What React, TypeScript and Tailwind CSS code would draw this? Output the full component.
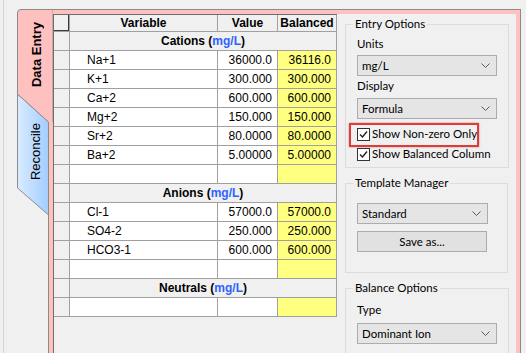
import type { ReactNode } from "react";

type Row =
  | { kind: "group"; label: string }
  | { kind: "data"; name: string; value: string; balanced: string }
  | { kind: "empty" };

const rows: Row[] = [
  { kind: "group", label: "Cations" },
  { kind: "data", name: "Na+1", value: "36000.0", balanced: "36116.0" },
  { kind: "data", name: "K+1", value: "300.000", balanced: "300.000" },
  { kind: "data", name: "Ca+2", value: "600.000", balanced: "600.000" },
  { kind: "data", name: "Mg+2", value: "150.000", balanced: "150.000" },
  { kind: "data", name: "Sr+2", value: "80.0000", balanced: "80.0000" },
  { kind: "data", name: "Ba+2", value: "5.00000", balanced: "5.00000" },
  { kind: "empty" },
  { kind: "group", label: "Anions" },
  { kind: "data", name: "Cl-1", value: "57000.0", balanced: "57000.0" },
  { kind: "data", name: "SO4-2", value: "250.000", balanced: "250.000" },
  { kind: "data", name: "HCO3-1", value: "600.000", balanced: "600.000" },
  { kind: "empty" },
  { kind: "group", label: "Neutrals" },
  { kind: "empty" },
];

const cell = "border-r border-b border-[#a0a0a0] h-[19px]";

function GridRow({ row }: { row: Row }) {
  if (row.kind === "group") {
    return (
      <>
        <div className={`${cell} bg-[#f0f0f0]`} />
        <div className={`${cell} col-span-3 flex items-center justify-center bg-[#f0f0f0] font-bold`}>
          {row.label}&nbsp;(<span className="text-[#2f63ff]">mg/L</span>)
        </div>
      </>
    );
  }
  const d = row.kind === "data" ? row : null;
  return (
    <>
      <div className={`${cell} bg-[#f0f0f0]`} />
      <div className={`${cell} flex items-center bg-white pl-[17px]`}>{d?.name}</div>
      <div className={`${cell} flex items-center justify-end bg-white pr-[5px]`}>{d?.value}</div>
      <div className={`${cell} flex items-center justify-end bg-[#ffff80] pr-[5px]`}>{d?.balanced}</div>
    </>
  );
}

function Combo({ value, w }: { value: string; w: string }) {
  return (
    <div className={`flex h-[21px] items-center justify-between border border-[#acacac] bg-[#e5e5e5] pl-[4px] pr-[6px] ${w}`}>
      <span>{value}</span>
      <svg width="9" height="5" viewBox="0 0 9 5">
        <path d="M0.5 0.5 L4.5 4.5 L8.5 0.5" fill="none" stroke="#5a5a5a" strokeWidth="1" />
      </svg>
    </div>
  );
}

function Check({ label, children }: { label: string; children?: ReactNode }) {
  return (
    <div className="relative flex h-[14px] items-center whitespace-nowrap">
      <span className="flex h-[13px] w-[13px] shrink-0 items-center justify-center border border-[#333] bg-white">
        <svg width="11" height="11" viewBox="0 0 11 11">
          <path d="M2 5.5 L4.5 8 L9 2.5" fill="none" stroke="#222" strokeWidth="1.4" />
        </svg>
      </span>
      <span className="ml-[2px]">{label}</span>
      {children}
    </div>
  );
}

function Group({ title, className, children }: { title: string; className: string; children: ReactNode }) {
  return (
    <fieldset className={`ml-[8px] w-[163px] border border-[#dcdcdc] px-[11px] ${className}`}>
      <legend className="ml-[-4px] px-[2px] leading-[14px]">{title}</legend>
      {children}
    </fieldset>
  );
}

export default function App() {
  return (
    <div className="flex h-[353px] w-[526px] overflow-hidden bg-[#f0f0f0] font-['Liberation_Sans',Arial,sans-serif] text-[12px] text-black">
      {/* tab strip */}
      <div className="relative h-full w-[53px] shrink-0">
        <svg className="absolute inset-0" width="53" height="353" viewBox="0 0 53 353">
          <defs>
            <linearGradient id="blueTab" x1="0" x2="1" y1="0" y2="0">
              <stop offset="0" stopColor="#d9ecff" />
              <stop offset="1" stopColor="#a3cdff" />
            </linearGradient>
          </defs>
          <line x1="3.5" y1="0" x2="3.5" y2="353" stroke="#d4d4d4" />
          <path d="M17.5 94 L48.5 122 L48.5 215 L17.5 188 Z" fill="url(#blueTab)" stroke="#8c8c8c" />
          <path
            d="M17.5 13 Q17.5 9.5 21 9.5 L53 9.5 L53 353 L48.5 353 L48.5 122 L17.5 94 Z"
            fill="#ffc0c0"
            stroke="#8c8c8c"
          />
          <rect x="49" y="122" width="4" height="231" fill="#ffc0c0" />
        </svg>
        <div className="absolute left-[21px] top-[12px] flex h-[85px] w-[31px] items-center justify-center">
          <span className="rotate-180 text-[13px] font-bold leading-[15px] [writing-mode:vertical-rl]">Data Entry</span>
        </div>
        <div className="absolute left-[20px] top-[109px] flex h-[85px] w-[31px] items-center justify-center">
          <span className="rotate-180 text-[13px] leading-[15px] [writing-mode:vertical-rl]">Reconcile</span>
        </div>
      </div>

      {/* tab page */}
      <div className="mt-[9px] w-[468px] shrink-0 border-r border-t border-[#8c8c8c]">
        <div className="flex h-full border-r-4 border-t-4 border-[#ffc0c0]">
          <div className="grid w-[284px] shrink-0 grid-cols-[16px_148px_60px_59px] content-start border-l border-t border-[#6e6e6e]">
            <div className="h-[17px] border-b border-r border-[#a0a0a0] bg-[#f0f0f0] shadow-[inset_-1px_-1px_0_#3c3c3c]" />
            <div className="flex h-[17px] items-center justify-center border-b border-r border-[#a0a0a0] bg-[#f0f0f0] font-bold">Variable</div>
            <div className="flex h-[17px] items-center justify-center border-b border-r border-[#a0a0a0] bg-[#f0f0f0] font-bold">Value</div>
            <div className="flex h-[17px] items-center justify-center border-b border-r border-[#a0a0a0] bg-[#f0f0f0] font-bold">Balanced</div>
            {rows.map((r, i) => (
              <GridRow key={i} row={r} />
            ))}
          </div>

          <div className="flex-1 font-['Lato','Liberation_Sans',sans-serif] text-[11.5px]">
            <Group title="Entry Options" className="mt-[3px] pb-[6px]">
              <div className="mt-[6px] leading-[14px]">Units</div>
              <Combo value="mg/L" w="mt-[4px] w-[140px]" />
              <div className="mt-[3px] leading-[14px]">Display</div>
              <Combo value="Formula" w="mt-[5px] w-[140px]" />
              <div className="mt-[8px]">
                <Check label="Show Non-zero Only">
                  <span className="absolute left-[-8px] top-[-4px] h-[24px] w-[130px] border-[2px] border-[#e53935] shadow-[0_0_2px_rgba(0,0,0,0.35)]" />
                </Check>
              </div>
              <div className="mt-[6px]">
                <Check label="Show Balanced Column" />
              </div>
            </Group>

            <Group title="Template Manager" className="mt-[8px] pb-[20px]">
              <Combo value="Standard" w="mt-[13px] w-[131px]" />
              <div className="mt-[7px] flex h-[21px] w-[130px] items-center justify-center border border-[#adadad] bg-[#e1e1e1]">
                Save as...
              </div>
            </Group>

            <Group title="Balance Options" className="mt-[8px] pb-[20px]">
              <div className="mt-[8px] leading-[14px]">Type</div>
              <Combo value="Dominant Ion" w="mt-[6px] w-[140px]" />
            </Group>
          </div>
        </div>
      </div>
    </div>
  );
}
